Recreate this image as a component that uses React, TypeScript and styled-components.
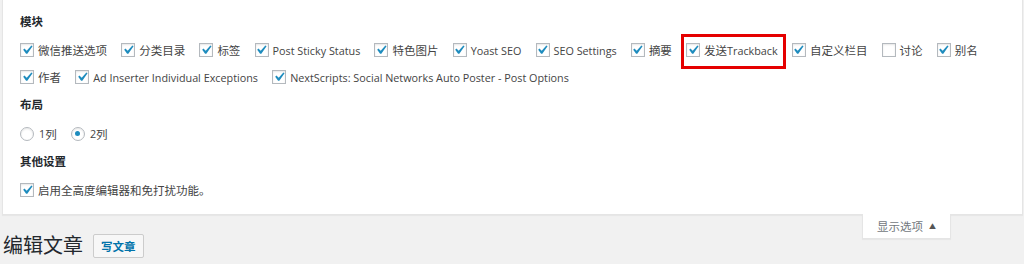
import styled, { createGlobalStyle } from 'styled-components';

const GlobalStyle = createGlobalStyle`
  html, body {
    margin: 0;
    padding: 0;
    background: #f1f1f1;
  }
  body {
    width: 1024px;
    height: 264px;
    overflow: hidden;
    font-family: "Open Sans", "Noto Sans CJK SC", sans-serif;
    font-size: 11.5px;
    color: #444;
  }
`;

const modules = [
  { name: '微信推送选项', on: true },
  { name: '分类目录', on: true },
  { name: '标签', on: true },
  { name: 'Post Sticky Status', on: true },
  { name: '特色图片', on: true },
  { name: 'Yoast SEO', on: true },
  { name: 'SEO Settings', on: true },
  { name: '摘要', on: true },
  { name: '发送Trackback', on: true, marked: true },
  { name: '自定义栏目', on: true },
  { name: '讨论', on: false },
  { name: '别名', on: true },
  { name: '作者', on: true },
  { name: 'Ad Inserter Individual Exceptions', on: true },
  { name: 'NextScripts: Social Networks Auto Poster - Post Options', on: true },
];

// Latin runs get a slightly smaller size so Open Sans takes the width of Segoe UI
const withLatin = (text: string) =>
  text.split(/([\x20-\x7e]+)/).map((part, i) =>
    /[\x20-\x7e]/.test(part) ? <SLatin key={i}>{part}</SLatin> : part
  );

const Check = ({ on }: { on: boolean }) => (
  <SBox>
    {on && (
      <svg viewBox="0 0 20 20" width="18" height="18">
        <path d="M14.83 4.89l1.34.94-5.81 8.38H9.02L5.78 9.67l1.34-1.25 2.57 2.4z" fill="#1e8cbe" />
      </svg>
    )}
  </SBox>
);

const App = () => {
  return (
    <>
      <GlobalStyle />
      <SPanel>
        <SHeading>模块</SHeading>
        <SPrefs>
          {modules.map((m) => (
            <SLabel key={m.name}>
              <Check on={m.on} />
              {withLatin(m.name)}
              {m.marked && <SMark />}
            </SLabel>
          ))}
        </SPrefs>

        <SHeading>布局</SHeading>
        <SPrefs>
          <SLabel>
            <SRadio />
            {withLatin('1')}列
          </SLabel>
          <SLabel>
            <SRadio $on />
            {withLatin('2')}列
          </SLabel>
        </SPrefs>

        <SHeading>其他设置</SHeading>
        <SPrefs>
          <SLabel>
            <Check on />
            启用全高度编辑器和免打扰功能。
          </SLabel>
        </SPrefs>
      </SPanel>

      <STabs>
        <STab>
          显示选项 <span className="arrow">▲</span>
        </STab>
      </STabs>

      <STitleRow>
        <h1>编辑文章</h1>
        <SAction>写文章</SAction>
      </STitleRow>
    </>
  );
};

const SPanel = styled.div`
  margin: 0 1px 0 2px;
  padding: 11.5px 17px 10px;
  background: #fff;
  border: 1px solid #e5e5e5;
  border-top: none;
  box-shadow: 0 1px 1px rgba(0, 0, 0, 0.04);
`;

const SHeading = styled.h5`
  margin: 0;
  font-size: 11.5px;
  line-height: 20px;
  font-weight: 600;
  color: #23282d;

  & + div {
    margin-top: 5px;
  }

  div + & {
    margin-top: 4.5px;
  }
`;

const SPrefs = styled.div`
  display: flex;
  flex-wrap: wrap;
  column-gap: 14.2px;
`;

const SLabel = styled.label`
  position: relative;
  display: inline-flex;
  align-items: center;
  height: 27px;
  white-space: pre;
  color: #444;
`;

const SLatin = styled.span`
  font-size: 10.8px;
`;

const SBox = styled.span`
  width: 14px;
  height: 14px;
  margin-right: 4px;
  box-sizing: border-box;
  border: 1px solid #b4b9be;
  background: #fff;
  box-shadow: inset 0 1px 2px rgba(0, 0, 0, 0.1);
  display: flex;
  align-items: center;
  justify-content: center;

  svg {
    flex: none;
    margin: -1px 0 0 -1px;
  }
`;

const SRadio = styled.span<{ $on?: boolean }>`
  width: 14px;
  height: 14px;
  margin-right: 5px;
  box-sizing: border-box;
  border: 1px solid #b4b9be;
  border-radius: 50%;
  background: #fff;
  box-shadow: inset 0 1px 2px rgba(0, 0, 0, 0.1);
  display: flex;
  align-items: center;
  justify-content: center;

  &::after {
    content: '';
    display: ${(p) => (p.$on ? 'block' : 'none')};
    width: 5px;
    height: 5px;
    border-radius: 50%;
    background: #1e8cbe;
  }
`;

const SMark = styled.span`
  position: absolute;
  left: -5px;
  right: -8px;
  top: -3px;
  bottom: -5px;
  border: 3px solid #e50000;
  pointer-events: none;
`;

const STabs = styled.div`
  float: right;
  margin-right: 73px;
`;

const STab = styled.div`
  margin-top: -1px;
  width: 89px;
  height: 25px;
  box-sizing: border-box;
  background: #fff;
  border: 1px solid #e5e5e5;
  border-top: none;
  box-shadow: 0 1px 1px rgba(0, 0, 0, 0.04);
  display: flex;
  align-items: center;
  justify-content: center;
  gap: 6px;
  color: #72777c;
  font-size: 11.5px;

  .arrow {
    font-size: 7px;
    color: #555;
  }
`;

const STitleRow = styled.div`
  display: flex;
  align-items: center;
  padding: 18px 0 0 3px;

  h1 {
    margin: 0;
    font-size: 20px;
    line-height: 26px;
    font-weight: 400;
    color: #23282d;
  }
`;

const SAction = styled.a`
  margin-left: 10px;
  height: 24px;
  padding: 0 7px;
  box-sizing: border-box;
  display: inline-flex;
  align-items: center;
  border: 1px solid #ccc;
  border-radius: 2px;
  background: #f7f7f7;
  color: #0073aa;
  font-size: 11.5px;
  font-weight: 600;
`;

export default App;
